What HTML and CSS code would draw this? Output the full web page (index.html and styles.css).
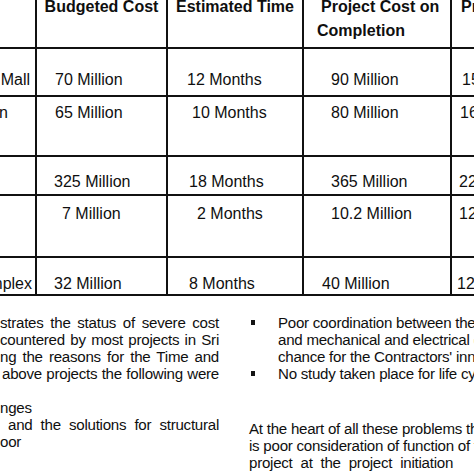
FILE: index.html
```html
<!DOCTYPE html>
<html>
<head>
<meta charset="utf-8">
<link rel="stylesheet" href="styles.css">
</head>
<body>
<div class="table">
  <div class="c head"></div>
  <div class="c head center">Budgeted Cost</div>
  <div class="c head center">Estimated Time</div>
  <div class="c head"><div class="h1">Project Cost on</div><div class="h2">Completion</div></div>
  <div class="c head"><div class="h4">Project Time on</div></div>

  <div class="c r1 first pe1">Shopping Mall</div>
  <div class="c r1 b1">70 Million</div>
  <div class="c r1 t19">12 Months</div>
  <div class="c r1 p27">90 Million</div>
  <div class="c r1 l9">15 Months</div>

  <div class="c r2 first pe2">Hospital Extension</div>
  <div class="c r2 b1">65 Million</div>
  <div class="c r2 t24">10 Months</div>
  <div class="c r2 p27">80 Million</div>
  <div class="c r2 l8">16 Months</div>

  <div class="c r3 first"></div>
  <div class="c r3 b0">325 Million</div>
  <div class="c r3 t21">18 Months</div>
  <div class="c r3 p27">365 Million</div>
  <div class="c r3 l7">22 Months</div>

  <div class="c r4 first"></div>
  <div class="c r4 b2">7 Million</div>
  <div class="c r4 t29">2 Months</div>
  <div class="c r4 p27">10.2 Million</div>
  <div class="c r4 l7">12 Months</div>

  <div class="c r5 first pe5">Office Complex</div>
  <div class="c r5 b0">32 Million</div>
  <div class="c r5 t21">8 Months</div>
  <div class="c r5 p18">40 Million</div>
  <div class="c r5 l5">12 Months</div>
</div>

<div class="text">
  <div class="left">
    <div class="j">strates the status of severe cost</div>
    <div class="j">countered by most projects in Sri</div>
    <div class="j">ng the reasons for the Time and</div>
    <div class="j in2">above projects the following were</div>
    <div class="gap"></div>
    <div class="ln">nges</div>
    <div class="j in8">and the solutions  for structural</div>
    <div class="ln">oor</div>
  </div>
  <div class="right">
    <div class="item">
      <div class="bul"><span class="sq"></span></div>
      <div class="lines">
        <div class="ln">Poor coordination between the structural</div>
        <div class="ln">and mechanical and electrical designs</div>
        <div class="ln">chance for the Contractors' innovations</div>
      </div>
    </div>
    <div class="item">
      <div class="bul"><span class="sq"></span></div>
      <div class="lines">
        <div class="ln">No study taken place for life cycle cost</div>
      </div>
    </div>
    <div class="para">
      <div class="ln">At the heart of all these problems there</div>
      <div class="ln">is poor consideration of function of the</div>
      <div class="ln ws">project at the project initiation</div>
    </div>
  </div>
</div>
</body>
</html>
```
FILE: styles.css
```css
html, body {
  margin: 0;
  padding: 0;
}
body {
  width: 474px;
  height: 474px;
  overflow: hidden;
  background: #fff;
  color: #0f0f0f;
  font-family: "Liberation Sans", Arial, sans-serif;
}
.table {
  display: grid;
  grid-template-columns: 200px 129px 134px 146px 100px;
  grid-template-rows: 67px 46px 58px 37px 60px 36px;
  gap: 2px;
  background: #111;
  padding-bottom: 2px;
  margin-left: -165px;
  margin-top: -20px;
  width: max-content;
  font-size: 16px;
  line-height: 20px;
}
.c {
  background: #fff;
  white-space: nowrap;
  overflow: hidden;
  box-sizing: border-box;
}
.head {
  font-weight: bold;
  line-height: 24px;
  padding-top: 15px;
}
.center { text-align: center; }
.h1 { padding-left: 17px; }
.h2 { padding-left: 13px; }
.h4 { padding-left: 9px; }

.r1 { padding-top: 21px; }
.r2 { padding-top: 6px; }
.r3 { padding-top: 15px; }
.r4 { padding-top: 8px; }
.r5 { padding-top: 16px; }

.first { text-align: right; }
.pe1 { padding-right: 5px; }
.pe2 { padding-right: 27px; }
.pe5 { padding-right: 3px; }

.b0 { padding-left: 17px; }
.b1 { padding-left: 18px; }
.b2 { padding-left: 25px; }

.t19 { padding-left: 19px; }
.t21 { padding-left: 21px; }
.t24 { padding-left: 24px; }
.t29 { padding-left: 29px; }

.p18 { padding-left: 18px; }
.p27 { padding-left: 27px; }

.l5 { padding-left: 5px; }
.l7 { padding-left: 7px; }
.l8 { padding-left: 8px; }
.l9 { padding-left: 10px; }

.text {
  display: flex;
  margin-top: 18px;
  font-size: 15.1px;
  letter-spacing: -0.25px;
  line-height: 17px;
}
.left {
  width: 219px;
  flex: none;
}
.j {
  text-align: justify;
  text-align-last: justify;
}
.in2 { margin-left: 2px; }
.in8 { margin-left: 8px; }
.gap { height: 17px; }
.ln { white-space: nowrap; }
.right {
  margin-left: 30px;
  flex: none;
  width: 260px;
}
.item {
  display: flex;
}
.bul {
  width: 29px;
  flex: none;
}
.sq {
  display: block;
  width: 4px;
  height: 5px;
  margin-top: 6px;
  margin-left: 2px;
  background: #141414;
}
.para {
  margin-top: 38px;
}
.ws { word-spacing: 4px; }
```
